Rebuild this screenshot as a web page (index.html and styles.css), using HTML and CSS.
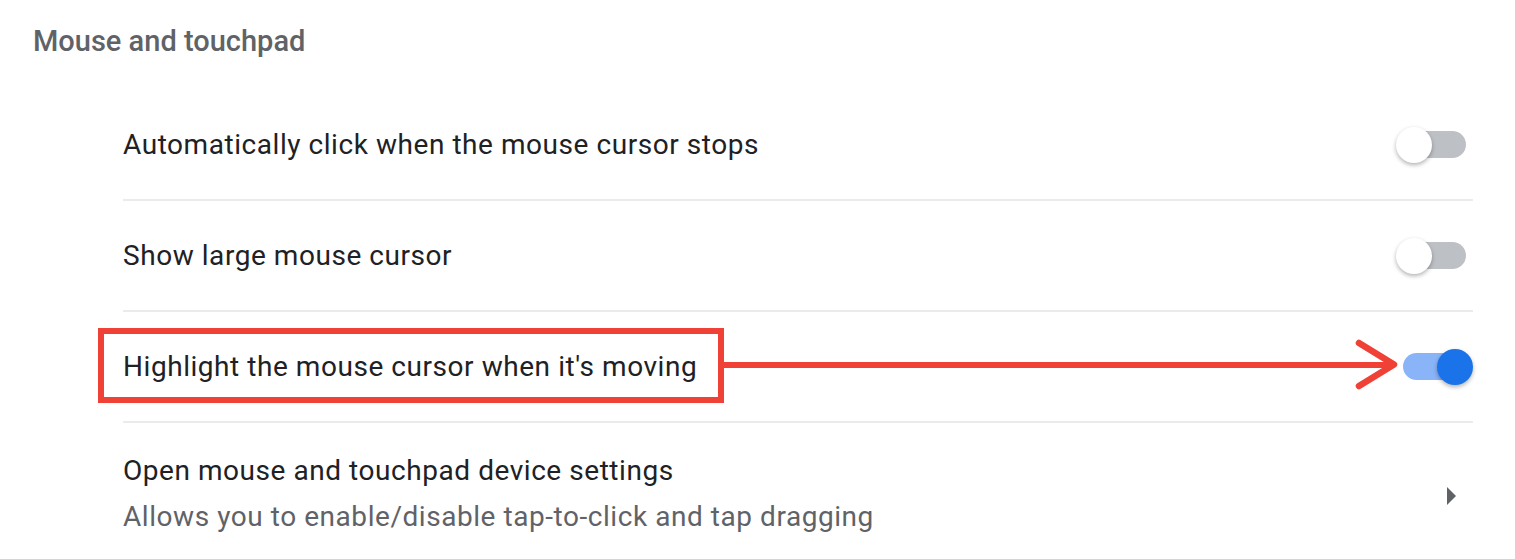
FILE: index.html
```html
<!DOCTYPE html>
<html>
<head>
<meta charset="utf-8">
<link rel="stylesheet" href="styles.css">
</head>
<body>
<div class="page">
  <h2 class="heading">Mouse and touchpad</h2>
  <div class="list">
    <div class="row">
      <div class="label">Automatically click when the mouse cursor stops</div>
      <div class="toggle"><div class="track"></div><div class="knob"></div></div>
    </div>
    <div class="row">
      <div class="label">Show large mouse cursor</div>
      <div class="toggle"><div class="track"></div><div class="knob"></div></div>
    </div>
    <div class="row">
      <div class="label">Highlight the mouse cursor when it's moving</div>
      <div class="toggle on"><div class="track"></div><div class="knob"></div></div>
    </div>
    <div class="row row-link">
      <div class="texts">
        <div class="label">Open mouse and touchpad device settings</div>
        <div class="sub">Allows you to enable/disable tap-to-click and tap dragging</div>
      </div>
      <svg class="chev" width="9" height="18" viewBox="0 0 9 18"><path d="M0 0 L9 9 L0 18 Z" fill="#5f6368"/></svg>
    </div>
  </div>
  <div class="callout"></div>
  <svg class="arrow" width="1515" height="559" viewBox="0 0 1515 559">
    <line x1="724" y1="365" x2="1393" y2="365" stroke="#ef4136" stroke-width="6"/>
    <polyline points="1359,343 1394,364.5 1359,386" fill="none" stroke="#ef4136" stroke-width="6.5" stroke-linecap="round" stroke-linejoin="round"/>
  </svg>
</div>
</body>
</html>
```
FILE: styles.css
```css
html, body {
  margin: 0;
  padding: 0;
  background: #ffffff;
}
.page {
  position: relative;
  width: 1515px;
  height: 559px;
  overflow: hidden;
  font-family: Roboto, "Noto Sans", sans-serif;
}
.heading {
  margin: 0;
  padding: 21px 0 0 33px;
  font-size: 29px;
  line-height: 40px;
  font-weight: 500;
  color: #5f6368;
}
.list {
  padding: 29px 42px 0 123px;
}
.row {
  display: flex;
  align-items: center;
  justify-content: space-between;
  height: 109px;
  border-bottom: 2px solid #ebebeb;
}
.row-link {
  height: auto;
  border-bottom: none;
  padding: 26px 0 27px;
}
.label {
  font-size: 28px;
  line-height: 43px;
  letter-spacing: 0.55px;
  color: #202124;
}
.sub {
  margin-top: 3px;
  font-size: 28px;
  line-height: 43px;
  letter-spacing: 0.55px;
  color: #5f6368;
}
.toggle {
  position: relative;
  width: 77px;
  height: 36px;
  display: flex;
  align-items: center;
}
.track {
  margin-left: 6px;
  width: 64px;
  height: 27px;
  border-radius: 14px;
  background: #bdc1c6;
}
.knob {
  position: absolute;
  left: 0;
  top: 0;
  width: 36px;
  height: 36px;
  border-radius: 50%;
  background: #ffffff;
  box-shadow: 0 2px 4px rgba(0, 0, 0, 0.3);
}
.toggle.on .track {
  margin-left: 7px;
  width: 63px;
  background: #8ab4f8;
}
.toggle.on .knob {
  left: 41px;
  background: #1a73e8;
}
.chev {
  margin-right: 17px;
  margin-top: 4px;
}
.callout {
  position: absolute;
  left: 98px;
  top: 328px;
  width: 614px;
  height: 63px;
  border: 6px solid #ef4136;
}
.arrow {
  position: absolute;
  left: 0;
  top: 0;
}
```
